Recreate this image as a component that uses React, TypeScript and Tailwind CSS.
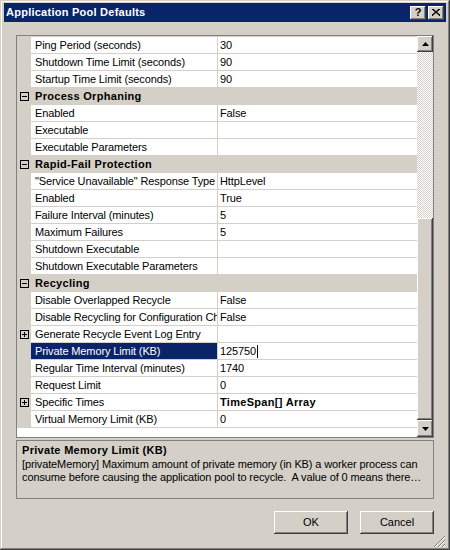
import React from "react";

type Row =
  | { kind: "group"; label: string }
  | {
      kind: "prop";
      name: string;
      value?: string;
      bold?: boolean;
      expand?: boolean;
      selected?: boolean;
    };

const rows: Row[] = [
  { kind: "prop", name: "Ping Period (seconds)", value: "30" },
  { kind: "prop", name: "Shutdown Time Limit (seconds)", value: "90" },
  { kind: "prop", name: "Startup Time Limit (seconds)", value: "90" },
  { kind: "group", label: "Process Orphaning" },
  { kind: "prop", name: "Enabled", value: "False" },
  { kind: "prop", name: "Executable" },
  { kind: "prop", name: "Executable Parameters" },
  { kind: "group", label: "Rapid-Fail Protection" },
  { kind: "prop", name: '"Service Unavailable" Response Type', value: "HttpLevel" },
  { kind: "prop", name: "Enabled", value: "True" },
  { kind: "prop", name: "Failure Interval (minutes)", value: "5" },
  { kind: "prop", name: "Maximum Failures", value: "5" },
  { kind: "prop", name: "Shutdown Executable" },
  { kind: "prop", name: "Shutdown Executable Parameters" },
  { kind: "group", label: "Recycling" },
  { kind: "prop", name: "Disable Overlapped Recycle", value: "False" },
  // name is cut by the column edge in the grid
  { kind: "prop", name: "Disable Recycling for Configuration Ch", value: "False" },
  { kind: "prop", name: "Generate Recycle Event Log Entry", expand: true },
  { kind: "prop", name: "Private Memory Limit (KB)", value: "125750", selected: true },
  { kind: "prop", name: "Regular Time Interval (minutes)", value: "1740" },
  { kind: "prop", name: "Request Limit", value: "0" },
  { kind: "prop", name: "Specific Times", value: "TimeSpan[] Array", bold: true, expand: true },
  { kind: "prop", name: "Virtual Memory Limit (KB)", value: "0" },
];

// classic 3D raised edge
const raised =
  "bg-[#d4d0c8] shadow-[inset_-1px_-1px_#404040,inset_1px_1px_#ffffff,inset_-2px_-2px_#808080,inset_2px_2px_#d4d0c8]";

function ExpandBox({ plus }: { plus: boolean }) {
  return (
    <svg width="9" height="9" viewBox="0 0 9 9" className="block">
      <rect x="0.5" y="0.5" width="8" height="8" fill="none" stroke="#000" />
      <line x1="2" y1="4.5" x2="7" y2="4.5" stroke="#000" />
      {plus && <line x1="4.5" y1="2" x2="4.5" y2="7" stroke="#000" />}
    </svg>
  );
}

function Arrow({ up }: { up: boolean }) {
  return (
    <svg width="7" height="4" viewBox="0 0 7 4" className="block">
      {up ? (
        <polygon points="3.5,0 7,4 0,4" fill="#000" />
      ) : (
        <polygon points="0,0 7,0 3.5,4" fill="#000" />
      )}
    </svg>
  );
}

function GridRow({ row }: { row: Row }) {
  if (row.kind === "group") {
    return (
      <div className="flex h-[17px] bg-[#d4d0c8]">
        <div className="w-[14px] flex items-center justify-end pr-[2px]">
          <ExpandBox plus={false} />
        </div>
        <div className="pl-[4px] font-bold tracking-[0.3px] leading-[17px] whitespace-nowrap">{row.label}</div>
      </div>
    );
  }
  return (
    <div className="flex h-[17px]">
      <div className="w-[14px] bg-[#d4d0c8] flex items-center justify-end pr-[2px]">
        {row.expand && <ExpandBox plus />}
      </div>
      <div
        className={`w-[187px] border-r border-b border-[#d4d0c8] pl-[4px] leading-[16px] tracking-[-0.12px] overflow-hidden whitespace-nowrap ${
          row.selected ? "bg-[#0a246a] text-white" : "bg-white"
        }`}
      >
        {row.name}
      </div>
      <div
        className={`w-[199px] border-b border-[#d4d0c8] bg-white pl-[2px] leading-[16px] whitespace-nowrap flex items-center ${
          row.bold ? "font-bold tracking-[0.3px]" : "tracking-[-0.12px]"
        }`}
      >
        {row.value}
        {row.selected && <span className="inline-block w-px h-[13px] bg-black ml-px" />}
      </div>
    </div>
  );
}

export default function App() {
  return (
    <div
      className="w-[450px] h-[550px] bg-[#d4d0c8] text-[11px] text-black flex flex-col pt-[3px] pl-[4px] pr-[4px] shadow-[inset_-1px_-1px_#404040,inset_1px_1px_#d4d0c8,inset_-2px_-2px_#808080,inset_2px_2px_#ffffff] overflow-hidden"
      style={{ fontFamily: '"Liberation Sans", Arial, sans-serif' }}
    >
      {/* title bar */}
      <div className="h-[19px] bg-[#0a246a] flex items-center pl-[2px] pr-[2px]">
        <div className="text-white font-bold tracking-[0.25px] text-[11px] flex-1">Application Pool Defaults</div>
        <div className={`${raised} w-[16px] h-[14px] flex items-center justify-center font-bold text-[11px] leading-none`}>
          ?
        </div>
        <div className={`${raised} w-[16px] h-[14px] ml-[2px] flex items-center justify-center`}>
          <svg width="8" height="7" viewBox="0 0 8 7">
            <path d="M0 0 L8 7 M8 0 L0 7 M1 0 L8 6 M7 0 L0 6" stroke="#000" strokeWidth="1" />
          </svg>
        </div>
      </div>

      {/* property grid */}
      <div className="ml-[12px] mt-[13px] w-[418px] h-[403px] border border-[#808080] flex">
        <div className="w-[400px] bg-white flex flex-col">
          <div className="h-px bg-[#d4d0c8]" />
          {rows.map((r, i) => (
            <GridRow key={i} row={r} />
          ))}
        </div>
        <div className="w-[16px] flex flex-col">
          <div className={`${raised} h-[16px] flex items-center justify-center`}>
            <Arrow up />
          </div>
          <div className="h-[166px] bg-[repeating-conic-gradient(#d4d0c8_0%_25%,#ffffff_0%_50%)] bg-[length:2px_2px]" />
          <div className={`${raised} flex-1`} />
          <div className={`${raised} h-[17px] flex items-center justify-center`}>
            <Arrow up={false} />
          </div>
        </div>
      </div>

      {/* description */}
      <div className="ml-[12px] mt-[2px] w-[418px] h-[59px] border border-[#808080] pl-[5px] pt-[2px]">
        <div className="font-bold tracking-[0.3px] leading-[15px]">Private Memory Limit (KB)</div>
        <div className="leading-[13px] tracking-[-0.12px] whitespace-pre">
          {"[privateMemory] Maximum amount of private memory (in KB) a worker process can\nconsume before causing the application pool to recycle.  A value of 0 means there\u2026"}
        </div>
      </div>

      {/* buttons */}
      <div className="mt-[12px] flex justify-end gap-[12px] pr-[12px]">
        <div className={`${raised} w-[74px] h-[23px] flex items-center justify-center`}>OK</div>
        <div className={`${raised} w-[74px] h-[23px] flex items-center justify-center`}>Cancel</div>
      </div>

      {/* size grip */}
      <div className="flex justify-end mt-[1px]">
        <svg width="13" height="13" viewBox="0 0 13 13" className="block">
          <path d="M12 1 L1 12 M12 5 L5 12 M12 9 L9 12" stroke="#808080" strokeWidth="1" />
          <path d="M12 2 L2 12 M12 6 L6 12 M12 10 L10 12" stroke="#ffffff" strokeWidth="1" />
        </svg>
      </div>
    </div>
  );
}
